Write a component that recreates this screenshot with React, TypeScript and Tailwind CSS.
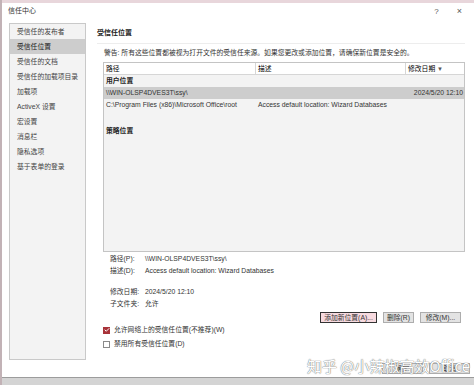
import { Check } from "lucide-react";

// ── Trust Center dialog (Office) ────────────────────────────────────────────

const navItems = [
  "受信任的发布者",
  "受信任位置",
  "受信任的文档",
  "受信任的加载项目录",
  "加载项",
  "ActiveX 设置",
  "宏设置",
  "消息栏",
  "隐私选项",
  "基于表单的登录",
];

function NavPanel() {
  return (
    <div className="mt-[3px] ml-[7px] w-[77px] h-[337px] border border-[#c9c9c9] bg-[#f3f3f3]">
      {navItems.map((item, i) => (
        <div
          key={item}
          className={
            i === 1
              ? "h-[15px] leading-[15px] pl-[7px] bg-[#cdcdcd] text-[#222]"
              : "h-[15px] leading-[15px] pl-[7px] text-[#444]"
          }
        >
          {item}
        </div>
      ))}
    </div>
  );
}

function LocationsTable() {
  return (
    <div className="mt-[4px] ml-[6px] w-[362px] h-[190px] border border-[#c4c4c4] bg-[#f3f3f3]">
      {/* header */}
      <div className="flex h-[12px] leading-[11px] bg-white border-b border-[#d6d6d6]">
        <div className="w-[152px] pl-[2px] border-r border-[#d6d6d6]">路径</div>
        <div className="w-[150px] pl-[2px] border-r border-[#d6d6d6]">描述</div>
        <div className="flex-1 pl-[2px]">
          修改日期 <span className="text-[6px] text-[#555]">▼</span>
        </div>
      </div>
      <div className="h-[12px] leading-[12px] pl-[2px] font-semibold text-[#222]">用户位置</div>
      <div className="flex h-[12px] leading-[12px] bg-[#cdcdcd] text-[#333]">
        <div className="w-[152px] pl-[2px]">\\WIN-OLSP4DVES3T\ssy\</div>
        <div className="w-[150px]" />
        <div className="flex-1 text-right pr-px">2024/5/20 12:10</div>
      </div>
      <div className="flex h-[12px] leading-[12px] text-[#333]">
        <div className="w-[152px] pl-[2px] whitespace-nowrap">C:\Program Files (x86)\Microsoft Office\root</div>
        <div className="w-[150px] pl-[2px] whitespace-nowrap">Access default location: Wizard Databases</div>
      </div>
      <div className="mt-[14px] h-[12px] leading-[12px] pl-[2px] font-semibold text-[#222]">策略位置</div>
    </div>
  );
}

function DetailRow({ label, value }: { label: string; value: string }) {
  return (
    <div className="flex h-[12px] leading-[12px] pl-[13px] text-[#333]">
      <div className="w-[35px]">{label}</div>
      <div>{value}</div>
    </div>
  );
}

function Button({ label, focused }: { label: string; focused?: boolean }) {
  return (
    <div
      className={
        focused
          ? "h-[11px] leading-[9px] px-[2px] border border-[#333] bg-[#f7dadf] text-[#333] text-center whitespace-nowrap"
          : "h-[11px] leading-[9px] px-[2px] border border-[#adadad] bg-[#e3e3e3] text-[#333] text-center whitespace-nowrap"
      }
    >
      {label}
    </div>
  );
}

function CheckRow({ label, checked }: { label: string; checked?: boolean }) {
  return (
    <div className="flex items-center h-[10px] pl-[6px] gap-[4px] text-[#333]">
      {checked ? (
        <div className="w-[7px] h-[7px] bg-[#a83339] flex items-center justify-center">
          <Check className="w-[6px] h-[6px] text-white" strokeWidth={4} />
        </div>
      ) : (
        <div className="w-[7px] h-[7px] border border-[#8a8a8a] bg-white" />
      )}
      <span>{label}</span>
    </div>
  );
}

export default function App() {
  return (
    <div className="relative w-[474px] h-[385px] overflow-hidden bg-white border-l-2 border-[#c2b2b6] font-['Liberation_Sans','Noto_Sans_CJK_SC',sans-serif] text-[6.8px]">
      {/* top edge */}
      <div className="h-[3px] bg-[#e8d6db]" />

      {/* title bar */}
      <div className="flex items-center h-[17px] pl-[6px] pr-[12px] text-[#333]">
        <span className="flex-1 text-[7px]">信任中心</span>
        <span className="text-[8px] text-[#555] mr-[18px]">?</span>
        <span className="text-[9px] text-[#555]">×</span>
      </div>

      {/* body */}
      <div className="flex h-[340px]">
        <NavPanel />
        <div className="ml-[11px] w-[369px] flex flex-col">
          <div className="mt-[7px] h-[12px] leading-[12px] font-semibold text-[#222] text-[7px]">受信任位置</div>
          <div className="mt-[4px] h-px w-[368px] bg-[#ededed]" />
          <div className="mt-[4px] h-[10px] leading-[10px] pl-[7px] text-[#333] whitespace-nowrap">
            警告: 所有这些位置都被视为打开文件的受信任来源。如果您更改或添加位置，请确保新位置是安全的。
          </div>
          <LocationsTable />
          <div className="mt-px">
            <DetailRow label="路径(P):" value="\\WIN-OLSP4DVES3T\ssy\" />
            <DetailRow label="描述(D):" value="Access default location: Wizard Databases" />
            <div className="h-[9px]" />
            <DetailRow label="修改日期:" value="2024/5/20 12:10" />
            <DetailRow label="子文件夹:" value="允许" />
          </div>
          <div className="mt-[2px] flex justify-end gap-[6px] pr-[5px]">
            <div className="w-[57px]">
              <Button label="添加新位置(A)..." focused />
            </div>
            <div className="w-[31px]">
              <Button label="删除(R)" />
            </div>
            <div className="w-[41px]">
              <Button label="修改(M)..." />
            </div>
          </div>
          <div className="mt-[2px] flex flex-col gap-[4px]">
            <CheckRow label="允许网络上的受信任位置(不推荐)(W)" checked />
            <CheckRow label="禁用所有受信任位置(D)" />
          </div>
        </div>
      </div>

      {/* bottom buttons */}
      <div className="flex justify-end gap-[6px] h-[17px] pt-[3px] pr-[4px]">
        <div className="w-[41px]">
          <Button label="确定" />
        </div>
        <div className="w-[41px]">
          <Button label="取消" />
        </div>
      </div>

      {/* lower frame */}
      <div className="h-[8px] border-t border-[#9c9c9c] bg-[#d4d4d4]" />

      {/* watermark */}
      <div className="absolute left-[305px] top-[356px] text-[15px] leading-[20px] text-white font-['Noto_Sans_CJK_SC',sans-serif] whitespace-nowrap [text-shadow:0_0_1px_#777,0_0_1px_#777]">
        知乎 @小辣椒高效Office
      </div>
    </div>
  );
}
